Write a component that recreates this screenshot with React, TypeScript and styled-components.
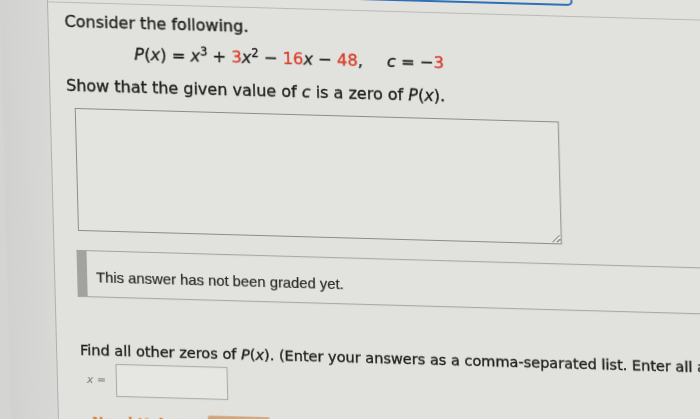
import styled, { createGlobalStyle } from "styled-components";

const GlobalStyle = createGlobalStyle`
  html, body {
    margin: 0;
    padding: 0;
  }

  body {
    width: 700px;
    height: 419px;
    overflow: hidden;
    background: #d4d5d2;
    font-family: "DejaVu Sans", Verdana, sans-serif;
  }
`;

// the reference is a photo of a monitor, so the whole sheet leans a little
const Sheet = styled.div`
  display: flex;
  width: 780px;
  height: 480px;
  margin-top: -24px;
  transform-origin: 0 24px;
  transform: skew(1.5deg, 1.6deg);
  filter: blur(0.3px);
`;

const Gutter = styled.div`
  flex: none;
  width: 47px;
  background: linear-gradient(90deg, #d1d2cf, #d8d9d6);
  border-right: 1px solid #b0b0ad;
`;

const Panel = styled.main`
  flex: 1;
  min-width: 0;
  overflow: hidden;
  display: flex;
  flex-direction: column;
  background: #e1e1dd;
  color: #1f1f1f;
`;

const Header = styled.header`
  box-sizing: border-box;
  height: 25px;
  display: flex;
  justify-content: flex-end;
  align-items: flex-end;
  padding: 0 207px 10px 0;
  border-bottom: 1px solid #b9b9b5;
`;

const OutlineButton = styled.div`
  width: 340px;
  height: 14px;
  border: 2px solid #2e6fb6;
  border-top: none;
  border-radius: 0 0 5px 5px;
`;

const Question = styled.section`
  display: flex;
  flex-direction: column;
  align-items: flex-start;
  padding-left: 16px;
  -webkit-text-stroke: 0.35px currentColor;
`;

const Prompt = styled.p<{ $top: number; $indent?: number; $size?: number }>`
  margin: ${({ $top }) => $top}px 0 0 ${({ $indent = 0 }) => $indent}px;
  font-size: ${({ $size = 16 }) => $size}px;
  line-height: 20px;
  white-space: nowrap;
`;

const Var = styled.i`
  font-style: italic;
`;

const Red = styled.span`
  color: #d9402f;
`;

const Sup = styled.sup`
  font-size: 0.7em;
  line-height: 0;
  vertical-align: 0.5em;
`;

const Gap = styled.span`
  display: inline-block;
  width: 24px;
`;

const AnswerBox = styled.textarea`
  box-sizing: border-box;
  width: 484px;
  height: 123px;
  margin: 12px 0 0 8px;
  border: 1px solid #8c8c89;
  background: #e3e3df;
  font: inherit;
`;

const GradeNote = styled.div`
  box-sizing: border-box;
  align-self: stretch;
  height: 47px;
  margin: 19px 0 0 6px;
  padding: 18px 0 0 9px;
  border: 1px solid #a3a3a0;
  border-left: 10px solid #a2a29f;
  background: #e2e2de;
  font-family: "Liberation Sans", Arial, sans-serif;
  font-size: 14.8px;
  line-height: 16px;
  color: #2a2a2a;
  -webkit-text-stroke: 0.2px currentColor;
`;

const SubPrompt = styled.p`
  margin: 44px 0 0 7px;
  font-size: 14.5px;
  line-height: 18px;
  white-space: nowrap;
`;

const InputRow = styled.div`
  display: flex;
  align-items: center;
  gap: 10px;
  margin: 4px 0 0 13px;
`;

const InputLabel = styled.span`
  font-size: 11px;
  color: #7a7a78;
  -webkit-text-stroke: 0;
`;

const ShortInput = styled.input`
  box-sizing: border-box;
  width: 112px;
  height: 33px;
  border: 1px solid #a6a6a3;
  background: #e6e6e2;
`;

const HelpRow = styled.div`
  display: flex;
  align-items: flex-start;
  gap: 26px;
  margin: 16px 0 0 17px;
`;

const HelpLabel = styled.span`
  padding-top: 2px;
  font-size: 14px;
  font-weight: bold;
  color: #e27b2c;
`;

const HelpButton = styled.span`
  padding: 5px 10px;
  border-radius: 2px;
  background: #d6a276;
  font-family: "Liberation Sans", Arial, sans-serif;
  font-size: 13px;
  color: #fff;
`;

export default function App() {
  return (
    <>
      <GlobalStyle />
      <Sheet>
        <Gutter />
        <Panel>
          <Header>
            <OutlineButton />
          </Header>
          <Question>
            <Prompt $top={9}>Consider the following.</Prompt>
            <Prompt $top={11} $indent={69} $size={16.3}>
              <Var>P</Var>(<Var>x</Var>) = <Var>x</Var>
              <Sup>3</Sup> + <Red>3</Red>
              <Var>x</Var>
              <Sup>2</Sup> − <Red>16</Red>
              <Var>x</Var> − <Red>48</Red>,<Gap />
              <Var>c</Var> = −<Red>3</Red>
            </Prompt>
            <Prompt $top={13}>
              Show that the given value of <Var>c</Var> is a zero of{" "}
              <Var>P</Var>(<Var>x</Var>).
            </Prompt>
            <AnswerBox />
            <GradeNote>This answer has not been graded yet.</GradeNote>
            <SubPrompt>
              Find all other zeros of <Var>P</Var>(<Var>x</Var>). (Enter your
              answers as a comma-separated list. Enter all answers including
              repetitions.)
            </SubPrompt>
            <InputRow>
              <InputLabel>
                <Var>x</Var> =
              </InputLabel>
              <ShortInput />
            </InputRow>
            <HelpRow>
              <HelpLabel>Need Help?</HelpLabel>
              <HelpButton>Read It</HelpButton>
            </HelpRow>
          </Question>
        </Panel>
      </Sheet>
    </>
  );
}
